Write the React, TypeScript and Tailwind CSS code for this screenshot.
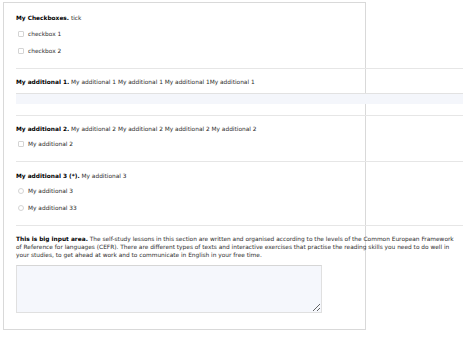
import React from "react";

function Check({ label, round }: { label: string; round?: boolean }) {
    return (
        <label className="flex items-center h-[8px] leading-[8px]">
            <span className={`inline-block w-[6px] h-[6px] border border-[#d4d4d4] bg-white ml-[2px] mr-[4px] ${round ? "rounded-full" : "rounded-[1px]"}`} />
            <span className="text-[#2b2b2b]">{label}</span>
        </label>
    );
}

function Divider() {
    return <div className="h-px bg-[#e6e6e6] w-[447px]" />;
}

export default function App() {
    return (
        <div className="pt-[2px] pl-[3px] bg-white min-h-[342px]" style={{ fontFamily: '"DejaVu Sans", Verdana, sans-serif' }}>
            <div className="w-[363px] h-[328px] border border-[#d9d9d9] text-[5.85px] leading-[8px] text-[#2b2b2b]">
                <div className="ml-[12px] w-[447px]">
                    <div className="pt-[11px]">
                        <div><b className="text-black">My Checkboxes.</b> tick</div>
                        <div className="mt-[8px]"><Check label="checkbox 1" /></div>
                        <div className="mt-[9px]"><Check label="checkbox 2" /></div>
                    </div>
                    <div className="mt-[13px]"><Divider /></div>

                    <div className="mt-[9px]">
                        <div><b className="text-black">My additional 1.</b> My additional 1 My additional 1 My additional 1My additional 1</div>
                        <input className="mt-[7px] block w-[447px] h-[11px] bg-[#f4f6fb] border-t border-[#e2e2e2] outline-none" />
                    </div>
                    <div className="mt-[11px]"><Divider /></div>

                    <div className="mt-[9px]">
                        <div><b className="text-black">My additional 2.</b> My additional 2 My additional 2 My additional 2 My additional 2</div>
                        <div className="mt-[7px]"><Check label="My additional 2" /></div>
                    </div>
                    <div className="mt-[13px]"><Divider /></div>

                    <div className="mt-[10px]">
                        <div><b className="text-black">My additional 3 (*).</b> My additional 3</div>
                        <div className="mt-[7px]"><Check round label="My additional 3" /></div>
                        <div className="mt-[9px]"><Check round label="My additional 33" /></div>
                    </div>
                    <div className="mt-[13px]"><Divider /></div>

                    <div className="mt-[9px]">
                        <p className="w-[442px]">
                            <b className="text-black">This is big input area.</b> The self-study lessons in this section are written and organised according to the levels of the Common European Framework of Reference for languages (CEFR). There are different types of texts and interactive exercises that practise the reading skills you need to do well in your studies, to get ahead at work and to communicate in English in your free time.
                        </p>
                        <textarea className="mt-[6px] block w-[306px] h-[48px] bg-[#f5f7fc] border border-[#e0e0e0] border-t-[#d6d6d6] outline-none resize" />
                    </div>
                </div>
            </div>
        </div>
    );
}
